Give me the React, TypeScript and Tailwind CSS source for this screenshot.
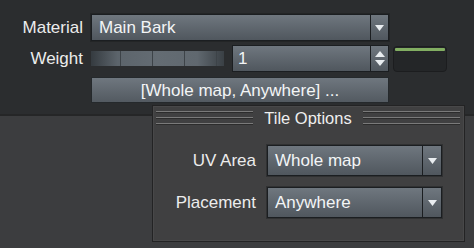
import React from "react";

const Tri = ({ up = false, w = 9, h = 6 }: { up?: boolean; w?: number; h?: number }) => (
  <svg width={w} height={h} viewBox={`0 0 ${w} ${h}`} className="block">
    <polygon
      points={up ? `${w / 2},0 ${w},${h} 0,${h}` : `0,0 ${w},0 ${w / 2},${h}`}
      fill="#e9edf0"
    />
  </svg>
);

const Dropdown = ({
  text,
  w,
  h,
  arrowW,
}: {
  text: string;
  w: string;
  h: string;
  arrowW: string;
}) => (
  <div
    className={`flex ${w} ${h} border border-[#1b1e21] bg-linear-to-b from-[#6f777f] to-[#50575e] shadow-[0_0_0_1px_rgba(20,22,24,0.35)]`}
  >
    <div className="flex-1 flex items-center pl-[7px] text-[17px] leading-none text-[#f3f5f6]">
      {text}
    </div>
    <div className={`${arrowW} border-l border-[#1b1e21] flex items-center justify-center`}>
      <Tri />
    </div>
  </div>
);

const Grip = () => (
  <div className="flex-1 flex flex-col gap-[4px]">
    {[0, 1, 2].map((i) => (
      <div key={i} className="flex flex-col">
        <div className="h-[1px] bg-[#7a7a7a]" />
        <div className="h-[1px] bg-[#2c2c2c]" />
      </div>
    ))}
  </div>
);

export default function App() {
  return (
    <div
      className="relative w-[474px] h-[248px] overflow-hidden bg-[#2b2d2f]"
      style={{ fontFamily: '"Liberation Sans", Arial, sans-serif' }}
    >
      {/* Top area */}
      <div className="h-[114px] pt-[14px] flex flex-col">
        {/* Material */}
        <div className="flex items-center h-[27px]">
          <div className="w-[83px] text-right text-[17px] leading-none text-[#ececec]">Material</div>
          <div className="ml-[8px]">
            <Dropdown text="Main Bark" w="w-[298px]" h="h-[27px]" arrowW="w-[18px]" />
          </div>
        </div>
        {/* Weight */}
        <div className="flex items-center h-[27px] mt-[4px]">
          <div className="w-[83px] text-right text-[17px] leading-none text-[#ececec]">Weight</div>
          <div className="ml-[8px] w-[133px] h-[15px] flex bg-[linear-gradient(to_right,#353b40,#5c646b_20%,#646c73_50%,#60686f_80%,#3a4045)]">
            <div className="w-[30px] border-r border-[#3d4348]" />
            <div className="w-[32px] border-r border-[#3d4348]" />
            <div className="w-[32px] border-r border-[#3d4348]" />
            <div className="w-[32px] border-r border-[#3d4348]" />
            <div className="flex-1" />
          </div>
          <div className="ml-[8px] flex w-[157px] h-[27px] border border-[#1b1e21] bg-linear-to-b from-[#6f777f] to-[#50575e]">
            <div className="flex-1 flex items-center pl-[5px] text-[17px] leading-none text-[#f3f5f6]">1</div>
            <div className="w-[18px] border-l border-[#1b1e21] flex flex-col items-center justify-center gap-[3px]">
              <Tri up w={10} h={6} />
              <Tri w={10} h={6} />
            </div>
          </div>
          <div className="ml-[4px] w-[54px] h-[26px] rounded-[4px] bg-[#242628] border border-[#1c1d1f] pt-[1px] px-[1px]">
            <div className="h-[3px] rounded-[1px] bg-[#82ae62]" />
          </div>
        </div>
        {/* Button */}
        <div className="flex items-center h-[26px] mt-[5px]">
          <div className="w-[83px]" />
          <div className="ml-[8px] w-[298px] h-[26px] flex items-center justify-center bg-linear-to-b from-[#6f777f] to-[#535a61] border border-[#25292c] text-[17px] leading-none text-[#f3f5f6]">
            [Whole map, Anywhere] ...
          </div>
        </div>
      </div>

      {/* Lower area */}
      <div className="h-[134px] border-t-2 border-[#252627] bg-[#3c3d3f]" />

      {/* Tile Options popup */}
      <div className="absolute left-[152px] top-[105px] w-[313px] h-[137px] bg-[#404041] border border-[#232324] shadow-[inset_0_0_0_1px_#484849]">
        <div className="h-[24px] flex items-center pl-[3px] pr-[4px]">
          <Grip />
          <div className="px-[11px] text-[16.5px] leading-none text-[#eeeeee]">Tile Options</div>
          <Grip />
        </div>
        <div className="mt-[15px] flex items-center h-[31px]">
          <div className="w-[103px] text-right text-[17px] leading-none text-[#ececec]">UV Area</div>
          <div className="ml-[11px]">
            <Dropdown text="Whole map" w="w-[175px]" h="h-[31px]" arrowW="w-[19px]" />
          </div>
        </div>
        <div className="mt-[11px] flex items-center h-[31px]">
          <div className="w-[103px] text-right text-[17px] leading-none text-[#ececec]">Placement</div>
          <div className="ml-[11px]">
            <Dropdown text="Anywhere" w="w-[175px]" h="h-[31px]" arrowW="w-[19px]" />
          </div>
        </div>
      </div>
    </div>
  );
}
